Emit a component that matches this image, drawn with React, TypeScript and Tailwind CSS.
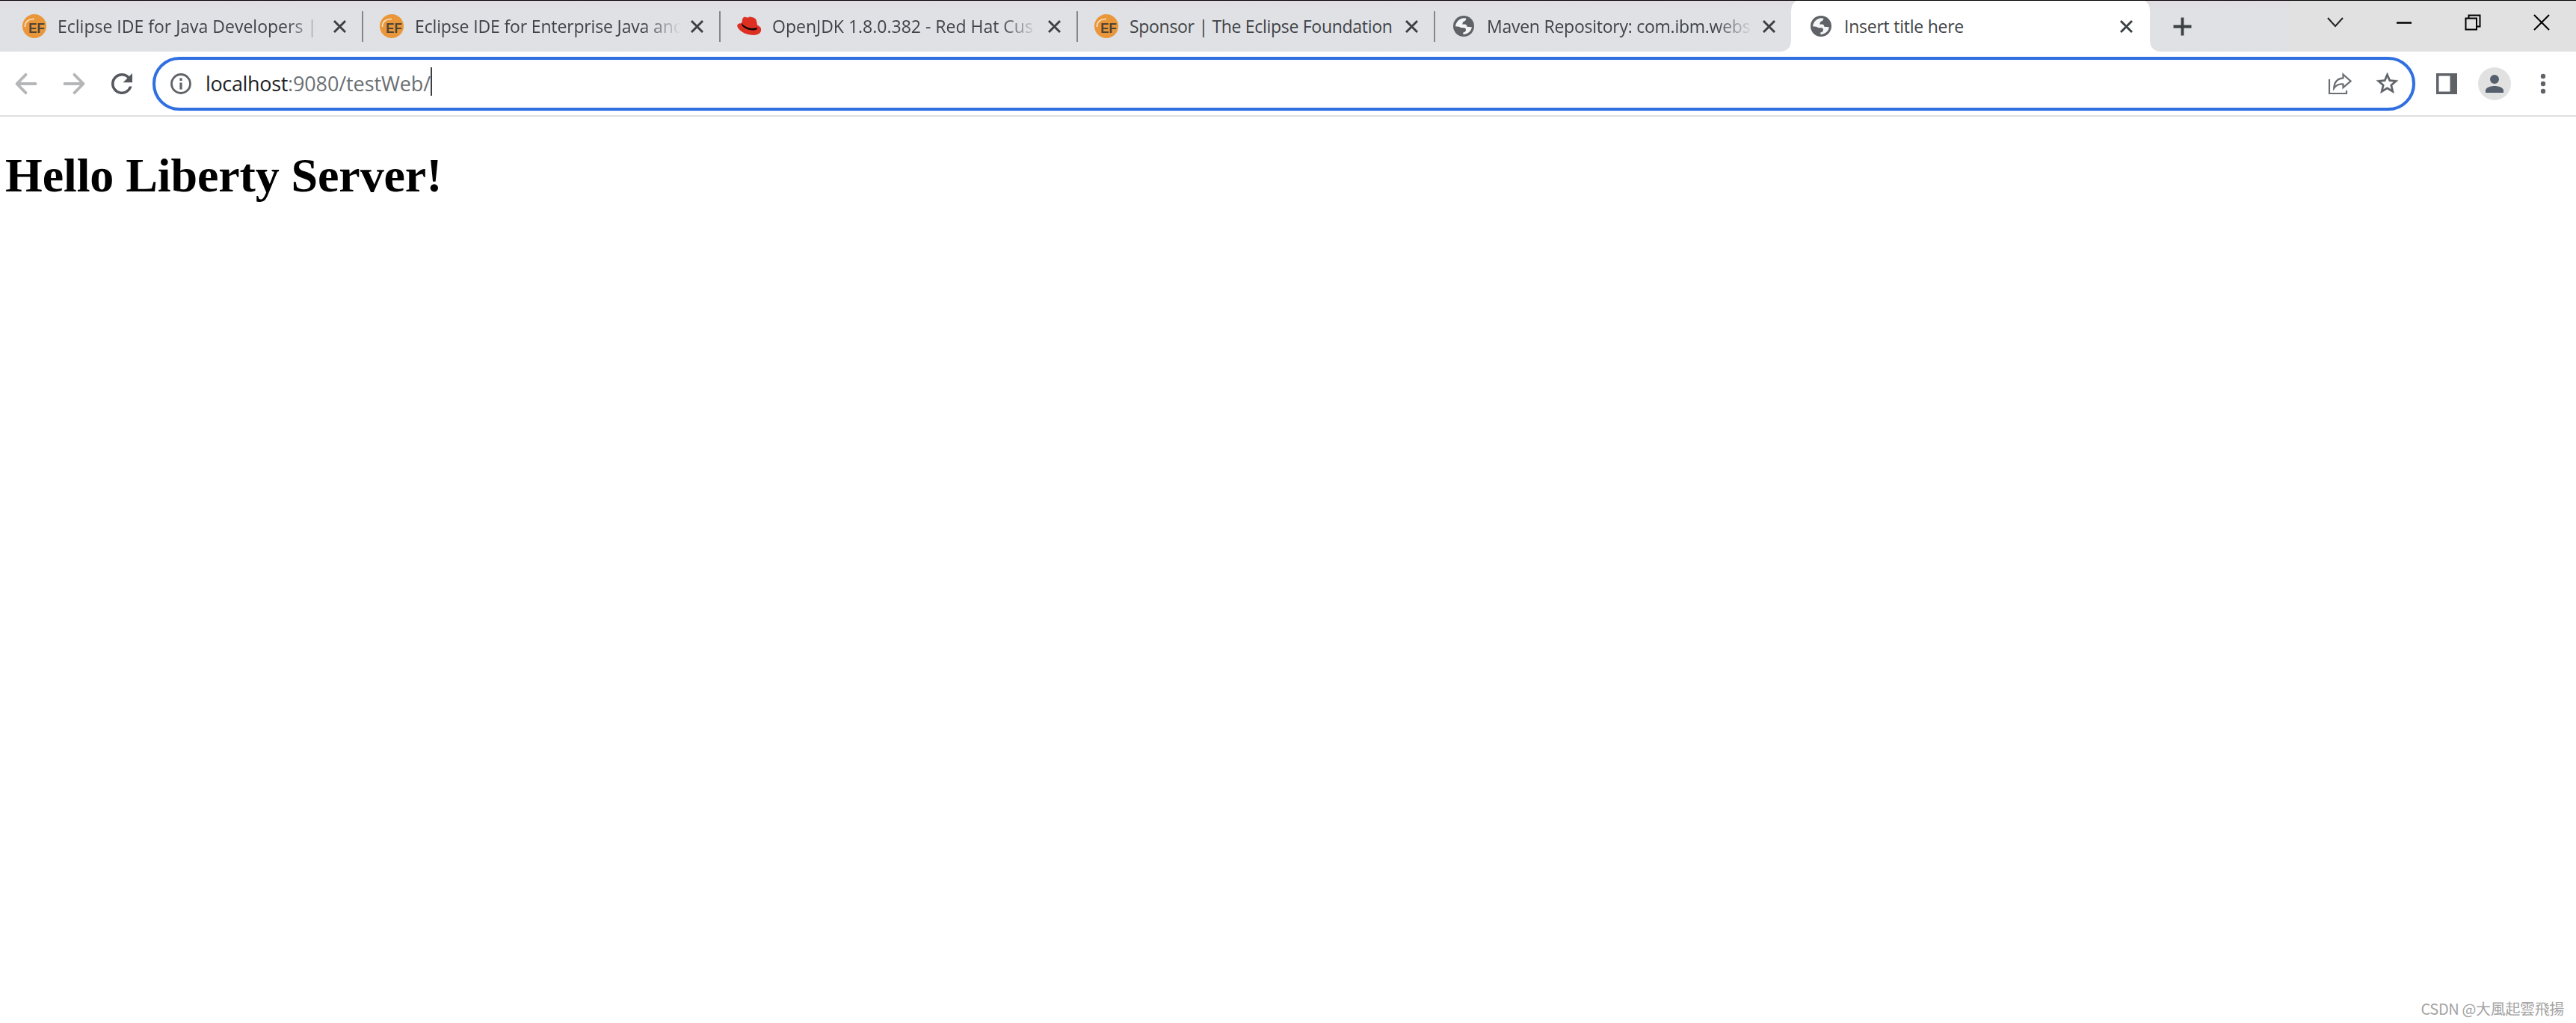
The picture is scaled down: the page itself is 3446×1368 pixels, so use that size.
import type { ReactNode } from "react";
import clsx from "clsx";

interface TabData {
  title: string;
  icon: ReactNode;
  tracking: string;
  faded?: boolean;
}

function EclipseIcon() {
  return (
    <svg className="size-8" viewBox="0 0 32 32">
      <circle cx="16" cy="16" r="16" fill="#e9973a" />
      <path d="M3.5 17C3 10.5 8 5.8 16 6.500" fill="none" stroke="#fbe6c8" strokeWidth="1.6" />
      <text
        x="8.3"
        y="25.3"
        fontSize="17.5"
        fontWeight="700"
        textLength="21.5"
        lengthAdjust="spacingAndGlyphs"
        fill="#4d4436"
        className="font-['Liberation_Sans',sans-serif]"
      >
        EF
      </text>
    </svg>
  );
}

function RedHatIcon() {
  return (
    <svg className="size-8" viewBox="0 0 32 32">
      <path
        d="M7.5 5.5C8.5 4 10.5 3.3 12.5 4.2C14 4.8 15 4.3 16.5 3.5C19 3.3 22.5 4.5 24.5 6C26 7.3 26.5 11 27 14.5C30 15.8 32.2 18 32.3 20.5C32.4 25 28 28 22.5 28C14 28 5 24.5 1 18C-0.5 15 0 12.3 6 12Z"
        fill="#dd2f22"
      />
      <path d="M6.3 12C9.5 17 19 20.8 27 17.8L26.7 20C22 23.5 9.5 20.5 6.3 14.5Z" fill="#140604" />
    </svg>
  );
}

function GlobeIcon() {
  return (
    <svg className="size-7" viewBox="0 0 28 28">
      <circle cx="14" cy="14" r="14" fill="#5f6368" />
      <path
        d="M3 14.3C3.5 9 7.5 4 13.5 3.3L17.3 3.5C17.5 6 16 7 13.8 7.8C12.3 9 13 10.5 12 11.5H15.5C17.5 11.5 18.5 13 18.3 14.8L24.8 15.2C24.5 20 20.5 24.5 13.3 25V22.6C16 22.2 17 20.5 17 18.5C17 16.8 15.5 16.3 14 16.3L10 16C9 15 7 14.6 3 14.3Z"
        fill="#f4f5f6"
      />
    </svg>
  );
}

function CloseIcon() {
  return (
    <svg className="size-[17px]" viewBox="0 0 17 17" fill="none" stroke="#3c4043" strokeWidth="2.9">
      <path d="M1 1L16 16M16 1L1 16" />
    </svg>
  );
}

const tabs: TabData[] = [
  { title: "Eclipse IDE for Java Developers | E", icon: <EclipseIcon />, tracking: "tracking-normal", faded: true },
  { title: "Eclipse IDE for Enterprise Java and", icon: <EclipseIcon />, tracking: "tracking-[-0.15px]", faded: true },
  { title: "OpenJDK 1.8.0.382 - Red Hat Cus", icon: <RedHatIcon />, tracking: "tracking-normal", faded: true },
  { title: "Sponsor | The Eclipse Foundation", icon: <EclipseIcon />, tracking: "tracking-[-0.3px]" },
  { title: "Maven Repository: com.ibm.webs", icon: <GlobeIcon />, tracking: "tracking-[-0.25px]", faded: true },
  { title: "Insert title here", icon: <GlobeIcon />, tracking: "tracking-[-0.25px]" },
];

function ActiveTabShape() {
  return (
    <svg className="absolute top-0 -left-[18px] h-[68px] w-[512px]" viewBox="0 0 512 68">
      <path d="M0 68Q16 68 16 52V14Q16 4 23 0H489Q496 4 496 14V52Q496 68 512 68Z" fill="#fff" />
    </svg>
  );
}

function Tab({ tab, active, separator }: { tab: TabData; active: boolean; separator: boolean }) {
  return (
    <div className="relative h-[68px] w-[478px] shrink-0">
      {active && <ActiveTabShape />}
      <div className="relative flex h-full items-center pl-[22px]">
        <div className="flex w-8 shrink-0 justify-center">{tab.icon}</div>
        <div
          className={clsx(
            "ml-[15px] w-[358px] shrink-0 whitespace-nowrap text-[23px] leading-8 text-[#3f4347]",
            tab.tracking,
            tab.faded && "[mask-image:linear-gradient(to_right,black_306px,transparent_356px)]",
          )}
        >
          {tab.title}
        </div>
        <button className="ml-[11px] shrink-0">
          <CloseIcon />
        </button>
        {separator && <div className="ml-[21px] h-[41px] w-0.5 shrink-0 bg-[#84878b]" />}
      </div>
    </div>
  );
}

function WindowControls() {
  return (
    <div className="ml-auto flex h-full w-[383px] bg-[#e1e1e1] pl-[15px]">
      <div className="flex h-[58px] w-[92px] items-center justify-center">
        <svg className="size-[22px]" viewBox="0 0 22 22" fill="none" stroke="#222" strokeWidth="2">
          <path d="M1 5L11 16L21 5" />
        </svg>
      </div>
      <div className="flex h-[58px] w-[92px] items-center justify-center">
        <svg className="size-[22px]" viewBox="0 0 22 22" fill="none" stroke="#000" strokeWidth="2.5">
          <path d="M1 11.5H21" />
        </svg>
      </div>
      <div className="flex h-[58px] w-[92px] items-center justify-center">
        <svg className="size-[22px]" viewBox="0 0 22 22" fill="none" stroke="#000" strokeWidth="2">
          <path d="M1.5 5.5H16V20.5H1.5ZM5.5 5.5V1.5H20.5V16.5H16" />
        </svg>
      </div>
      <div className="flex h-[58px] w-[92px] items-center justify-center">
        <svg className="size-[22px]" viewBox="0 0 22 22" fill="none" stroke="#000" strokeWidth="2">
          <path d="M1 1L21 21M21 1L1 21" />
        </svg>
      </div>
    </div>
  );
}

function Toolbar() {
  return (
    <div className="flex h-[85px] items-center">
      <div className="ml-[13.5px] flex w-[190.5px] shrink-0 gap-[22px]">
        <svg
          className="size-[42px] shrink-0"
          viewBox="0 0 42 42"
          fill="none"
          stroke="#b4b6b8"
          strokeWidth="3.8"
          strokeLinecap="round"
          strokeLinejoin="round"
        >
          <path d="M33.5 21H9M20.5 8.8L8.5 21L20.5 33.2" />
        </svg>
        <svg
          className="size-[42px] shrink-0"
          viewBox="0 0 42 42"
          fill="none"
          stroke="#b4b6b8"
          strokeWidth="3.8"
          strokeLinecap="round"
          strokeLinejoin="round"
        >
          <path d="M8.5 21H33M21.5 8.8L33.5 21L21.5 33.2" />
        </svg>
        <svg className="size-[42px] shrink-0" viewBox="0 0 24 24" fill="#55595e">
          <path d="M17.65 6.35A7.96 7.96 0 0 0 12 4a8 8 0 1 0 7.73 10h-2.08A6 6 0 1 1 12 6c1.66 0 3.14.69 4.22 1.78L13 11h7V4l-2.35 2.35z" />
        </svg>
      </div>
      <div className="flex h-[72px] w-[3027px] shrink-0 items-center rounded-full border-4 border-[#2f6fe0] pr-4 pl-5 shadow-[0_0_1px_#8ab4f8]">
        <svg className="size-7" viewBox="0 0 28 28" fill="none" stroke="#5f6368" strokeWidth="2.8">
          <circle cx="14" cy="14" r="12.5" />
          <path d="M14 12.5V21.5M14 6.5V10" strokeWidth="3.2" />
        </svg>
        <div className="ml-[19px] flex items-center text-[27px] leading-9 text-[#6b6f73]">
          <span className="tracking-[-0.35px] text-[#202124]">localhost</span>
          <span className="tracking-[-0.1px]">:9080/testWeb/</span>
          <span className="-mt-[6px] h-[38px] w-0.5 bg-[#3c4043]" />
        </div>
        <svg className="ml-auto h-[30px] w-8" viewBox="0 0 32 30" fill="none" stroke="#6b6e72" strokeWidth="2.2">
          <path d="M2 9V28H25V24" />
          <path d="M20.5 2.5L30.5 11.5L20.5 20V15.5C15 15 11 17 8.2 21C8.6 13.5 12.5 8 20.5 7.3Z" />
        </svg>
        <svg className="ml-[30px] size-[35px]" viewBox="0 0 24 24" fill="#5f6368" stroke="#5f6368" strokeWidth="0.3">
          <path d="M22 9.24l-7.19-.62L12 2 9.19 8.63 2 9.24l5.46 4.73L5.82 21 12 17.27 18.18 21l-1.63-7.03L22 9.24zM12 15.4l-3.76 2.27 1-4.28-3.32-2.88 4.38-.38L12 6.1l1.71 4.04 4.38.38-3.32 2.88 1 4.28L12 15.4z" />
        </svg>
      </div>
      <svg className="ml-7 size-7 shrink-0" viewBox="0 0 28 28">
        <path d="M0 0H28V28H0ZM3.500 3.500V24.500H18.500V3.500Z" fill="#5f6368" fillRule="evenodd" />
      </svg>
      <svg className="ml-7 size-11 shrink-0" viewBox="0 0 44 44">
        <circle cx="22" cy="22" r="22" fill="#e1e1e1" />
        <circle cx="22" cy="16" r="6" fill="#55606c" />
        <path d="M10 34V31C10 27 17 25 22 25S34 27 34 31V34Z" fill="#55606c" />
      </svg>
      <svg className="ml-[39px] h-7 w-2 shrink-0" viewBox="0 0 8 28" fill="#5f6368">
        <circle cx="4" cy="4" r="3.2" />
        <circle cx="4" cy="14" r="3.2" />
        <circle cx="4" cy="24" r="3.2" />
      </svg>
    </div>
  );
}

export default function App() {
  return (
    <div className="relative h-[1368px] w-[3446px] overflow-hidden bg-white font-['Open_Sans','Noto_Sans',sans-serif]">
      <div className="flex h-[69px] border-t border-black bg-linear-to-b from-[#e2dde3] to-[#dfe1e5] to-[12px] pl-2">
        {tabs.map((tab, i) => (
          <Tab key={tab.title} tab={tab} active={i === tabs.length - 1} separator={i < 4} />
        ))}
        <button className="ml-[31px] flex items-center">
          <svg className="size-[25px]" viewBox="0 0 25 25" fill="none" stroke="#3c4043" strokeWidth="3.8">
            <path d="M12.5 0.5V24.5M0.5 12.5H24.5" />
          </svg>
        </button>
        <WindowControls />
      </div>
      <Toolbar />
      <main className="border-t-2 border-[#dfdfdf] pt-[42px] pl-[7px]">
        <h1 className="font-['Liberation_Serif',serif] text-[64px] leading-[74px] font-bold tracking-[-0.1px] text-black">
          Hello Liberty Server!
        </h1>
      </main>
      <div className="absolute right-4 bottom-1 font-['Noto_Sans_CJK_TC',sans-serif] text-[20px] leading-[30px] tracking-[-0.35px] text-[#a3a3a3]">
        CSDN @大風起雲飛揚
      </div>
    </div>
  );
}
